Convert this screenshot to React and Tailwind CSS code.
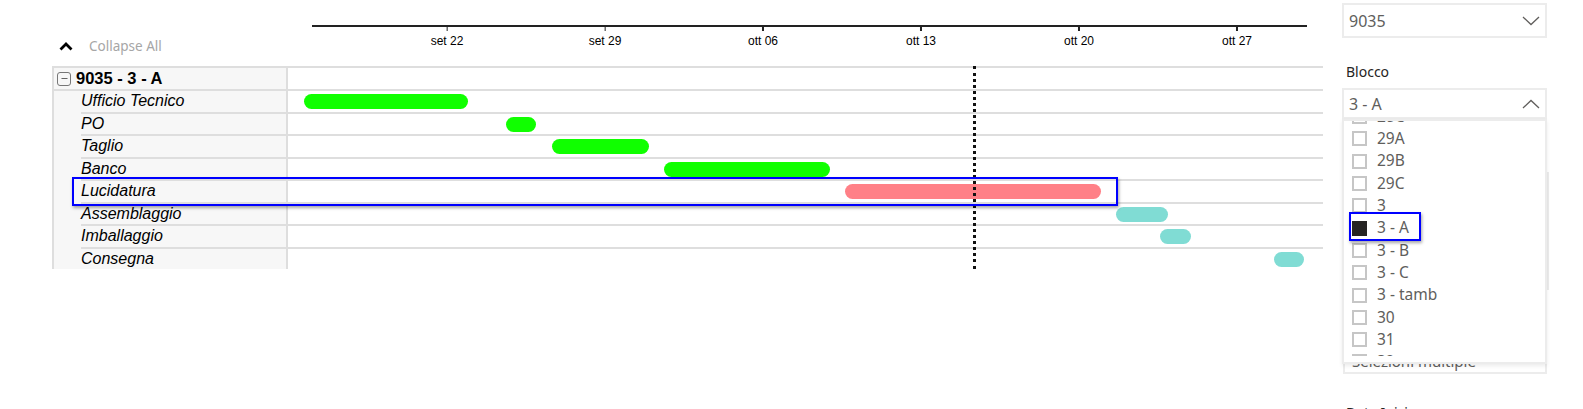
import { Minus } from 'lucide-react';

const ticks = ['set 22', 'set 29', 'ott 06', 'ott 13', 'ott 20', 'ott 27'];

// bar positions in px from the left edge of the chart column
const tasks = [
  { name: 'Ufficio Tecnico', start: 16, end: 180, color: '#10ff00' },
  { name: 'PO', start: 218, end: 248, color: '#10ff00' },
  { name: 'Taglio', start: 264, end: 361, color: '#10ff00' },
  { name: 'Banco', start: 376, end: 542, color: '#10ff00' },
  { name: 'Lucidatura', start: 557, end: 813, color: '#ff8087' },
  { name: 'Assemblaggio', start: 828, end: 880, color: '#80dcd4' },
  { name: 'Imballaggio', start: 872, end: 903, color: '#80dcd4' },
  { name: 'Consegna', start: 986, end: 1016, color: '#80dcd4' },
];

const blocchi = ['28C', '29A', '29B', '29C', '3', '3 - A', '3 - B', '3 - C', '3 - tamb', '30', '31', '32'];

const TODAY = 686;

const Chevron = ({ up, className }) => (
  <svg width="18" height="10" viewBox="0 0 18 10" className={className}>
    <polyline
      points={up ? '1,9 9,1.5 17,9' : '1,1 9,8.5 17,1'}
      fill="none"
      stroke="#605e5c"
      strokeWidth="1.3"
    />
  </svg>
);

function Gantt() {
  return (
    <div className="w-[1326px] shrink-0 font-['Liberation_Sans',Arial,sans-serif] text-black">
      <div className="flex h-[66px]">
        <div className="w-[288px] shrink-0 pl-[59px] pt-[40px] flex items-start">
          <div className="flex items-center gap-[16px] font-['Segoe_UI','Noto_Sans',sans-serif]">
            <svg width="14" height="9" viewBox="0 0 14 9">
              <polyline points="1.5,7.5 7,2 12.5,7.5" fill="none" stroke="#000" strokeWidth="2.8" />
            </svg>
            <span className="text-[13.5px] leading-none text-[#a6a6a6]">Collapse All</span>
          </div>
        </div>
        <div className="flex-1 relative">
          <div className="absolute left-[24px] top-[25px] w-[995px] h-[2px] bg-[#222]" />
          {ticks.map((t, i) => (
            <div
              key={t}
              className="absolute top-[26px] flex flex-col items-center -translate-x-1/2"
              style={{ left: 159 + 158 * i }}
            >
              <div className="w-[1.5px] h-[5px] bg-[#222]" />
              <span className="text-[12px] leading-none mt-[4px] whitespace-nowrap">{t}</span>
            </div>
          ))}
        </div>
      </div>

      <div className="ml-[52px] w-[1271px] relative h-[203px] overflow-hidden">
        <div className="grid grid-cols-[236px_1fr] border-t-2 border-[#dedede]">
          <div className="bg-[#f7f7f7] border-l-2 border-r-2 border-[#dedede] h-[23px] border-b-2 flex items-center pl-[3px] gap-[5px]">
            <span className="w-[14px] h-[14px] border border-[#777] rounded-[3px] flex items-center justify-center">
              <Minus size={9} strokeWidth={2} className="text-[#333]" />
            </span>
            <span className="text-[16.5px] font-bold leading-none">9035 - 3 - A</span>
          </div>
          <div className="h-[23px] border-b-2 border-[#dedede]" />
          {tasks.map((t) => (
            <div key={t.name} className="contents">
              <div className="bg-[#f7f7f7] border-l-2 border-r-2 border-[#dedede] h-[22.5px] pl-[27px]">
                <div className="h-full border-b-2 border-[#dedede] flex items-center">
                  <span className="text-[16px] italic leading-none">{t.name}</span>
                </div>
              </div>
              <div className="h-[22.5px] border-b-2 border-[#dedede] relative">
                <div
                  className="absolute top-[3px] h-[15px] rounded-full"
                  style={{ left: t.start, width: t.end - t.start, backgroundColor: t.color }}
                />
              </div>
            </div>
          ))}
        </div>
        <div
          className="absolute top-0 bottom-0 border-l-[3px] border-dotted border-[#111]"
          style={{ left: 236 + TODAY - 1 }}
        />
        <div className="absolute left-[20px] top-[111px] w-[1046px] h-[29px] border-2 border-[#0000ff] shadow-[1px_2px_3px_rgba(0,0,0,0.35)]" />
      </div>
    </div>
  );
}

function Slicers() {
  return (
    <div className="ml-[16px] w-[205px] shrink-0 relative font-['Segoe_UI','Noto_Sans',sans-serif]">
      <div className="mt-[3px] h-[35px] border-2 border-[#ececec] flex items-center justify-between pl-[5px] pr-[5px]">
        <span className="text-[16px] text-[#605e5c]">9035</span>
        <Chevron />
      </div>
      <div className="mt-[24px] h-[20px] pl-[4px] text-[14px] leading-[20px] text-[#252423]">Blocco</div>
      <div className="mt-[6px] h-[31px] border-2 border-[#ececec] flex items-center justify-between pl-[5px] pr-[5px]">
        <span className="text-[16px] text-[#605e5c]">3 - A</span>
        <Chevron up />
      </div>
      <div className="mt-[53px] w-[207px] h-[118px] border-2 border-[#ececec]" />
      <div className="mt-[53px] ml-[1px] h-[31px] border-2 border-[#ececec] flex items-center pl-[7px] pt-[6px]">
        <span className="text-[15px] text-[#605e5c] leading-none">Selezioni multiple</span>
      </div>
      <div className="mt-[29px] h-[20px] pl-[4px] text-[14px] leading-[20px] text-[#252423]">Data Inizio</div>

      <div className="absolute left-0 top-[119px] w-[205px] h-[245px] bg-white border-2 border-[#ececec] shadow-[0_2px_4px_rgba(0,0,0,0.08)]">
        <div className="relative h-[235px] overflow-hidden">
          <div className="-mt-[15.5px]">
            {blocchi.map((b) => {
              const sel = b === '3 - A';
              return (
                <div key={b} className="h-[22.3px] flex items-center pl-[8px] gap-[10px]">
                  <span
                    className={
                      sel
                        ? 'w-[15px] h-[15px] bg-[#252423]'
                        : 'w-[15px] h-[15px] border-2 border-[#c6c6c6]'
                    }
                  />
                  <span className="text-[15.5px] text-[#605e5c] leading-none">{b}</span>
                </div>
              );
            })}
          </div>
        </div>
        <div className="absolute left-[5px] top-[91px] w-[72px] h-[29px] border-2 border-[#0000ff] shadow-[1px_2px_3px_rgba(0,0,0,0.35)]" />
      </div>
    </div>
  );
}

export default function App() {
  return (
    <div className="w-[1583px] h-[409px] overflow-hidden bg-white flex">
      <Gantt />
      <Slicers />
    </div>
  );
}
